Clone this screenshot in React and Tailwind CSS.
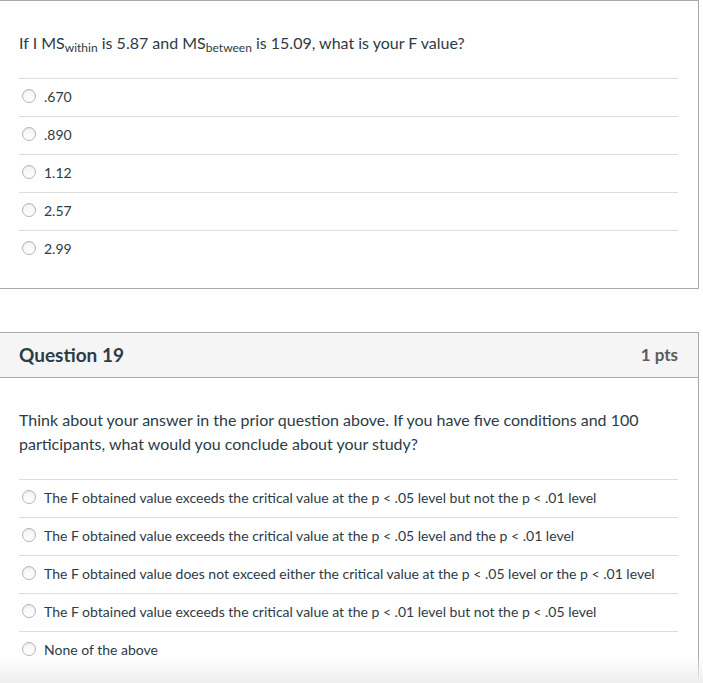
import React from "react";

const Radio = () => (
  <span className="ml-[3px] mr-[8px] inline-block h-[14px] w-[14px] shrink-0 rounded-full border border-[#b4b4b4] bg-gradient-to-b from-[#f4f4f4] to-white shadow-[inset_0_1px_1px_rgba(0,0,0,0.06)]" />
);

const Option = ({ children }) => (
  <div className="flex h-[38px] items-center border-t border-[#dcdcdc] pb-[3px] text-[14px] text-[#2d3b45]">
    <Radio />
    <span>{children}</span>
  </div>
);

export default function App() {
  const q1 = [".670", ".890", "1.12", "2.57", "2.99"];
  const q2 = [
    "The F obtained value exceeds the critical value at the p < .05 level but not the p < .01 level",
    "The F obtained value exceeds the critical value at the p < .05 level and the p < .01 level",
    "The F obtained value does not exceed either the critical value at the p < .05 level or the p < .01 level",
    "The F obtained value exceeds the critical value at the p < .01 level but not the p < .05 level",
    "None of the above",
  ];
  return (
    <div
      className="relative h-[683px] w-[703px] overflow-hidden bg-white text-[#2d3b45]"
      style={{ fontFamily: "Lato, 'Open Sans', sans-serif" }}
    >
      <div className="w-[699px] border-t border-r border-b border-[#a9a9a9] pl-[19px] pr-[20px] pb-[20px]">
        <div className="pt-[30px] pb-[23px] text-[16px] leading-[24px]">
          If I MS<sub className="text-[12px]">within</sub> is 5.87 and MS
          <sub className="text-[12px]">between</sub> is 15.09, what is your F value?
        </div>
        {q1.map((t) => (
          <Option key={t}>{t}</Option>
        ))}
      </div>

      <div className="mt-[43px] w-[699px] border-t border-r border-[#a9a9a9]">
        <div className="flex h-[45px] items-center justify-between border-b border-[#a9a9a9] bg-[#f5f5f5] pl-[19px] pr-[20px]">
          <span className="text-[19px] font-bold text-[#2d3b45]">Question 19</span>
          <span className="text-[17px] font-bold text-[#5c5c5c]">1 pts</span>
        </div>
        <div className="pl-[19px] pr-[20px]">
          <div className="pt-[30px] pb-[23px] text-[16px] leading-[24px]">
            Think about your answer in the prior question above. If you have five conditions and 100
            participants, what would you conclude about your study?
          </div>
          {q2.map((t) => (
            <Option key={t}>{t}</Option>
          ))}
          <div className="h-[40px]" />
        </div>
      </div>

      <div className="pointer-events-none absolute bottom-0 left-0 h-[28px] w-full bg-gradient-to-b from-white/0 to-[#efefef]" />
    </div>
  );
}
